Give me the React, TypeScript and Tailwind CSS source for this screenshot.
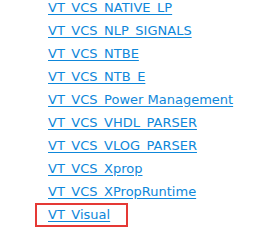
import React from "react";

const items = [
  "VT_VCS_NATIVE_LP",
  "VT_VCS_NLP_SIGNALS",
  "VT_VCS_NTBE",
  "VT_VCS_NTB_E",
  "VT_VCS_Power Management",
  "VT_VCS_VHDL_PARSER",
  "VT_VCS_VLOG_PARSER",
  "VT_VCS_Xprop",
  "VT_VCS_XPropRuntime",
];

export default function App() {
  return (
    <div
      className="w-[274px] h-[239px] bg-white overflow-hidden"
      style={{ fontFamily: '"DejaVu Sans", Verdana, sans-serif' }}
    >
      <ul className="flex flex-col pl-[48px] -mt-[4px] text-[13px] text-[#0e87da]">
        {items.map((t) => (
          <li key={t} className="h-[23px] flex items-center whitespace-nowrap">
            <a href="#" className="underline underline-offset-[2px] decoration-[#0e87da]">
              {t}
            </a>
          </li>
        ))}
        <li className="h-[23px] flex items-center">
          <div className="-ml-[13px] w-[93px] h-[24px] border-2 border-[#e53935] pl-[11px] flex items-center">
            <a href="#" className="underline underline-offset-[2px] decoration-[#0e87da]">
              VT_Visual
            </a>
          </div>
        </li>
      </ul>
    </div>
  );
}
